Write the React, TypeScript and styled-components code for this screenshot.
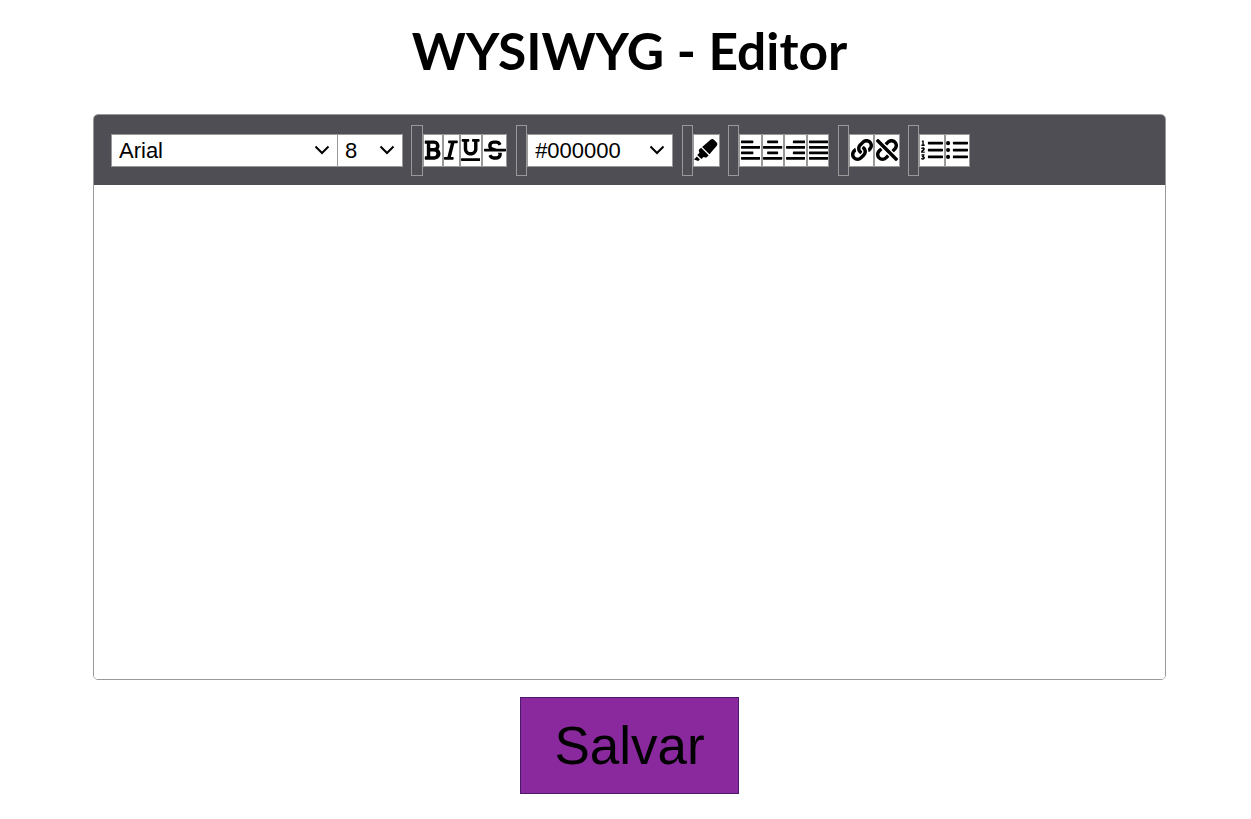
import { createGlobalStyle } from "styled-components";
import styled from "styled-components";
import {
  FaBold,
  FaItalic,
  FaUnderline,
  FaStrikethrough,
  FaHighlighter,
  FaAlignLeft,
  FaAlignCenter,
  FaAlignRight,
  FaAlignJustify,
  FaLink,
  FaUnlink,
  FaListOl,
  FaListUl,
} from "react-icons/fa";

const GlobalStyle = createGlobalStyle`
  body {
    margin: 0;
    background: #fff;
    font-family: "Liberation Sans", Arial, sans-serif;
  }
`;

const Page = styled.div`
  display: flex;
  flex-direction: column;
  align-items: center;
  padding-left: 8px;
`;

const Title = styled.h1`
  margin: 18px 0 31px;
  height: 65px;
  line-height: 65px;
  font-family: Lato, sans-serif;
  font-size: 51.5px;
  font-weight: 700;
  color: #000;
`;

const Editor = styled.div`
  box-sizing: border-box;
  width: 1073px;
  height: 566px;
  border: 1px solid #999;
  border-radius: 5px;
  overflow: hidden;
  display: flex;
  flex-direction: column;
`;

const Toolbar = styled.div`
  height: 70px;
  flex: none;
  display: flex;
  align-items: center;
  padding-left: 17px;
  background: #4f4e54;
`;

const chevron =
  "data:image/svg+xml,%3Csvg xmlns='http://www.w3.org/2000/svg' width='16' height='10'%3E%3Cpath d='M1.5 1.5 8 8l6.5-6.5' fill='none' stroke='%23000' stroke-width='2'/%3E%3C/svg%3E";

const Select = styled.select<{ $width: number }>`
  box-sizing: border-box;
  width: ${(p) => p.$width}px;
  height: 33px;
  padding: 0 0 0 7px;
  appearance: none;
  border: 1px solid #999;
  border-radius: 0;
  background: #fff url("${chevron}") no-repeat right 7px center;
  color: #000;
  font-family: "Liberation Sans", Arial, sans-serif;
  font-size: 22px;

  & + & {
    margin-left: -1px;
  }
`;

const Separator = styled.div`
  box-sizing: border-box;
  width: 11.3px;
  height: 51px;
  margin-left: 8.4px;
  border: 1px solid #999;
`;

const ToolButton = styled.button<{ $ratio: number }>`
  box-sizing: border-box;
  height: 33px;
  padding: 0 0.67px;
  display: flex;
  align-items: center;
  border: 1px solid #999;
  background: #fff;
  color: #000;

  svg {
    height: 22px;
    width: ${(p) => (p.$ratio * 22).toFixed(2)}px;
    display: block;
  }
`;

const Content = styled.div`
  flex: 1;
  background: #fff;
`;

const SaveButton = styled.button`
  box-sizing: border-box;
  width: 219px;
  height: 97px;
  margin-top: 17px;
  border: 1px solid #4b1a6b;
  background: #89299d;
  color: #000;
  font-family: "Liberation Sans", Arial, sans-serif;
  font-size: 53px;
`;

export default function App() {
  return (
    <Page>
      <GlobalStyle />
      <Title>WYSIWYG - Editor</Title>
      <Editor>
        <Toolbar>
          <Select $width={227} defaultValue="Arial">
            <option>Arial</option>
          </Select>
          <Select $width={66} defaultValue="8">
            <option>8</option>
          </Select>
          <Separator />
          <ToolButton $ratio={0.75}><FaBold /></ToolButton>
          <ToolButton $ratio={0.625}><FaItalic /></ToolButton>
          <ToolButton $ratio={0.875}><FaUnderline /></ToolButton>
          <ToolButton $ratio={1}><FaStrikethrough /></ToolButton>
          <Separator />
          <Select $width={146} defaultValue="#000000">
            <option>#000000</option>
          </Select>
          <Separator />
          <ToolButton $ratio={1.0625}><FaHighlighter /></ToolButton>
          <Separator />
          <ToolButton $ratio={0.875}><FaAlignLeft /></ToolButton>
          <ToolButton $ratio={0.875}><FaAlignCenter /></ToolButton>
          <ToolButton $ratio={0.875}><FaAlignRight /></ToolButton>
          <ToolButton $ratio={0.875}><FaAlignJustify /></ToolButton>
          <Separator />
          <ToolButton $ratio={1}><FaLink /></ToolButton>
          <ToolButton $ratio={1}><FaUnlink /></ToolButton>
          <Separator />
          <ToolButton $ratio={1}><FaListOl /></ToolButton>
          <ToolButton $ratio={1}><FaListUl /></ToolButton>
        </Toolbar>
        <Content />
      </Editor>
      <SaveButton>Salvar</SaveButton>
    </Page>
  );
}
